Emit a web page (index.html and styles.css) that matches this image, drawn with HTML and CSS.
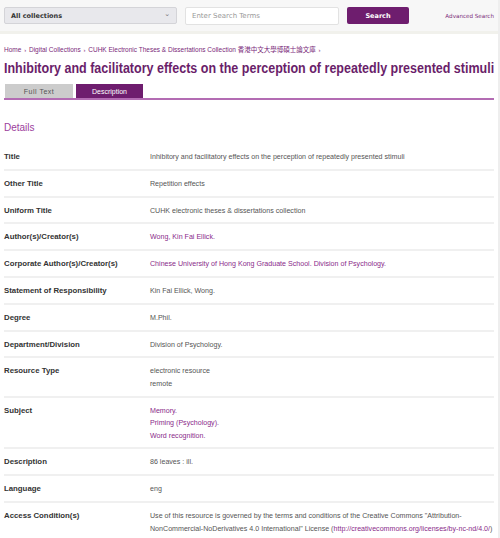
FILE: index.html
```html
<!DOCTYPE html>
<html>
<head>
<meta charset="utf-8">
<link rel="stylesheet" href="styles.css">
</head>
<body>
<div class="page">
  <div class="topbar">
    <div class="select"><span>All collections</span><span class="caret">&#8964;</span></div>
    <div class="search-input">Enter Search Terms</div>
    <div class="search-btn">Search</div>
    <a class="adv">Advanced Search</a>
  </div>
  <div class="band"></div>
  <div class="content">
    <div class="crumbs"><a>Home</a> <span class="sep">›</span> <a>Digital Collections</a> <span class="sep">›</span> <a>CUHK Electronic Theses &amp; Dissertations Collection 香港中文大學博碩士論文庫</a> <span class="sep">›</span></div>
    <h1 class="title"><span class="title-text">Inhibitory and facilitatory effects on the perception of repeatedly presented stimuli</span></h1>
    <div class="tabs">
      <div class="tab">Full Text</div>
      <div class="tab active">Description</div>
    </div>
    <h2 class="details">Details</h2>
    <div class="rows">
      <div class="row"><div class="label">Title</div><div class="value">Inhibitory and facilitatory effects on the perception of repeatedly presented stimuli</div></div>
      <div class="row"><div class="label">Other Title</div><div class="value">Repetition effects</div></div>
      <div class="row"><div class="label">Uniform Title</div><div class="value">CUHK electronic theses &amp; dissertations collection</div></div>
      <div class="row"><div class="label">Author(s)/Creator(s)</div><div class="value"><a>Wong, Kin Fai Ellick.</a></div></div>
      <div class="row"><div class="label">Corporate Author(s)/Creator(s)</div><div class="value"><a>Chinese University of Hong Kong Graduate School. Division of Psychology.</a></div></div>
      <div class="row"><div class="label">Statement of Responsibility</div><div class="value">Kin Fai Ellick, Wong.</div></div>
      <div class="row"><div class="label">Degree</div><div class="value">M.Phil.</div></div>
      <div class="row"><div class="label">Department/Division</div><div class="value">Division of Psychology.</div></div>
      <div class="row"><div class="label">Resource Type</div><div class="value">electronic resource<br>remote</div></div>
      <div class="row"><div class="label">Subject</div><div class="value"><a>Memory.</a><br><a>Priming (Psychology).</a><br><a>Word recognition.</a></div></div>
      <div class="row"><div class="label">Description</div><div class="value">86 leaves : ill.</div></div>
      <div class="row"><div class="label">Language</div><div class="value">eng</div></div>
      <div class="row"><div class="label">Access Condition(s)</div><div class="value">Use of this resource is governed by the terms and conditions of the Creative Commons "Attribution-NonCommercial-NoDerivatives 4.0 International" License (<a>http://creativecommons.org/licenses/by-nc-nd/4.0/</a>)</div></div>
    </div>
  </div>
</div>
</body>
</html>
```
FILE: styles.css
```css
html, body { margin: 0; padding: 0; background: #fff; }
body { font-family: "Liberation Sans", Arial, sans-serif; color: #444; overflow: hidden; }
.page { width: 498px; border-right: 2px solid #eeeeee; min-height: 538px; overflow: hidden; }
a { color: #8a2b8a; text-decoration: none; }

.topbar {
  display: flex; align-items: center;
  height: 31px; padding: 0 4px; box-sizing: border-box;
  background: #f7f7f7;
  font-family: "DejaVu Sans", Verdana, sans-serif;
}
.select {
  width: 173px; height: 17px; box-sizing: border-box;
  background: #e8e8ec; border: 1px solid #d4d4d8; border-radius: 2px;
  display: flex; align-items: center; justify-content: space-between;
  padding: 0 6px; font-size: 6.5px; font-weight: bold; color: #333;
}
.caret { font-size: 7px; color: #777; font-weight: normal; margin-top: -3px; }
.search-input {
  margin-left: 8px; width: 154px; height: 18px; box-sizing: border-box;
  background: #fff; border: 1px solid #e2e2e2; border-radius: 2px;
  display: flex; align-items: center; padding: 0 6px;
  font-size: 7px; color: #999;
}
.search-btn {
  margin-left: 8px; width: 62px; height: 17px; box-sizing: border-box;
  background: #6e1d6e; border-radius: 2px; color: #fff;
  display: flex; align-items: center; justify-content: center;
  font-size: 6.5px; font-weight: bold;
}
.adv { margin-left: auto; font-size: 5.6px; color: #7a2a7a; }
.band { height: 3px; background: #f1f1ec; }

.content { padding: 0 4px; }
.crumbs { margin-top: 10px; font-size: 6.5px; color: #7a2a7a; white-space: nowrap; font-family: "Liberation Sans", Arial, "Noto Sans CJK TC", sans-serif; }
.crumbs a { color: #7a2a7a; }
.sep { font-size: 6px; margin: 0 1px; }
.title {
  margin: 4px 0 0; font-size: 14.5px; font-weight: bold; color: #6a1e6a;
  white-space: nowrap; line-height: 20px; width: 492px; overflow: hidden;
}
.title-text { display: inline-block; transform: scaleX(0.863); transform-origin: 0 50%; }
.tabs {
  display: flex; gap: 3px; margin-top: 6px; padding-left: 1px;
  border-bottom: 2px solid #b36cb3;
}
.tab {
  width: 68px; height: 14px; display: flex; align-items: center; justify-content: center;
  background: #cccccc; color: #555; font-size: 7px; letter-spacing: 0.5px;
}
.tab.active { background: #6e1d6e; color: #fff; letter-spacing: 0; width: 67px; }
.details { margin: 21px 0 0; font-size: 10px; font-weight: normal; color: #9c3d9c; line-height: 14px; }
.rows { margin-top: 9px; }
.row {
  display: flex; padding: 7px 0 5.3px; border-bottom: 2px solid #f0f0f0;
  font-size: 7.1px; line-height: 12.5px;
}
.label { width: 146px; flex-shrink: 0; font-weight: bold; color: #333; font-size: 7.8px; }
.value { flex: 1; color: #555; }
```
